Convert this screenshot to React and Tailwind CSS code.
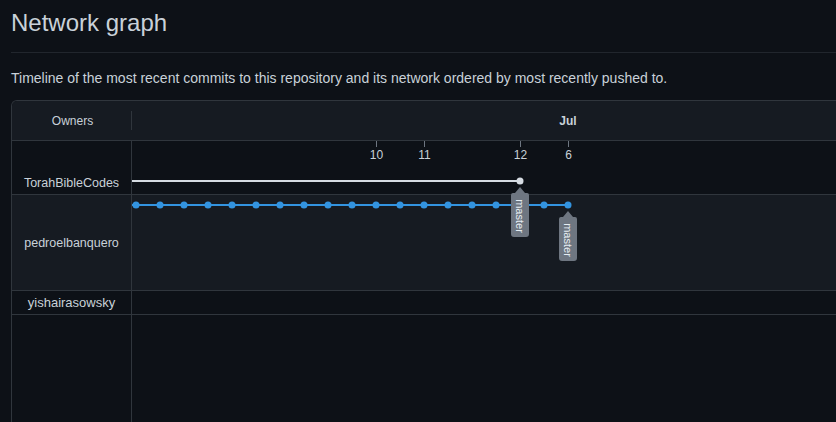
import React from "react";

const FONT = { fontFamily: '"Liberation Sans", Arial, sans-serif' };

function Label({ x, tipY }) {
  const top = tipY + 6;
  const bottom = tipY + 50;
  const l = x - 9;
  const r = x + 9;
  const d = `M ${x} ${tipY} L ${x + 5} ${top} L ${r - 2} ${top} Q ${r} ${top} ${r} ${top + 2} L ${r} ${bottom - 3} Q ${r} ${bottom} ${r - 3} ${bottom} L ${l + 3} ${bottom} Q ${l} ${bottom} ${l} ${bottom - 3} L ${l} ${top + 2} Q ${l} ${top} ${l + 2} ${top} L ${x - 5} ${top} Z`;
  const cy = (top + bottom) / 2 + 1;
  return (
    <g>
      <path d={d} fill="#6e7681" />
      <text
        x={x}
        y={cy}
        fill="#e6edf3"
        fontSize="11"
        textAnchor="middle"
        dominantBaseline="central"
        transform={`rotate(90 ${x} ${cy})`}
        style={FONT}
      >
        master
      </text>
    </g>
  );
}

function Graph() {
  const dots = Array.from({ length: 19 }, (_, k) => 136 + 24 * k);
  const dates = [
    { x: 376, t: "10" },
    { x: 424, t: "11" },
    { x: 520, t: "12" },
    { x: 568, t: "6" },
  ];
  return (
    <svg
      className="absolute left-0 top-0 pointer-events-none"
      width="836"
      height="422"
      viewBox="0 0 836 422"
    >
      <text x="568" y="125" fill="#c9d1d9" fontSize="12" fontWeight="700" textAnchor="middle" style={FONT}>
        Jul
      </text>
      {dates.map((d) => (
        <g key={d.t}>
          <line x1={d.x + 0.5} y1="141" x2={d.x + 0.5} y2="147" stroke="#6e7681" strokeWidth="1" />
          <text x={d.x + 0.5} y="159" fill="#c9d1d9" fontSize="12" textAnchor="middle" style={FONT}>
            {d.t}
          </text>
        </g>
      ))}
      <line x1="132" y1="181" x2="520" y2="181" stroke="#d6dce3" strokeWidth="2" />
      <circle cx="520" cy="181" r="3.5" fill="#d6dce3" />
      <line x1="132" y1="205" x2="568" y2="205" stroke="#3394e0" strokeWidth="2" />
      {dots.map((x) => (
        <circle key={x} cx={x} cy="205" r="3.5" fill="#3394e0" />
      ))}
      <Label x={520} tipY={187} />
      <Label x={568} tipY={211} />
    </svg>
  );
}

export default function App() {
  return (
    <div
      className="relative w-[836px] h-[422px] overflow-hidden bg-[#0d1117]"
      style={FONT}
    >
      <div className="pl-[11px]">
        <h1 className="pt-[8px] pb-[14px] text-[24px] leading-[30px] font-normal text-[#c9d1d9] border-b border-[#21262d]">
          Network graph
        </h1>
        <p className="mt-[15px] text-[14px] leading-[20px] text-[#c9d1d9]">
          Timeline of the most recent commits to this repository and its network ordered by most recently pushed to.
        </p>
        <div className="mt-[12px] w-[900px] border-l border-t border-[#30363d] rounded-tl-[6px] overflow-hidden">
          <div className="flex h-[40px] bg-[#161b22] border-b border-[#30363d]">
            <div className="w-[119px] pl-[2px] flex items-center justify-center text-[12px] text-[#c9d1d9]">
              Owners
            </div>
            <div className="w-px h-[19px] self-center bg-[#30363d]" />
            <div className="flex-1" />
          </div>
          <div className="flex h-[54px] border-b border-[#30363d] bg-[#0d1117]">
            <div className="w-[120px] border-r border-[#30363d] flex items-end justify-center pb-[3px] text-[12.5px] leading-[16px] text-[#c9d1d9]">
              TorahBibleCodes
            </div>
            <div className="flex-1" />
          </div>
          <div className="flex h-[96px] border-b border-[#30363d] bg-[#161b22]">
            <div className="w-[120px] border-r border-[#30363d] flex items-center justify-center text-[12.5px] leading-[16px] text-[#c9d1d9]">
              pedroelbanquero
            </div>
            <div className="flex-1" />
          </div>
          <div className="flex h-[24px] border-b border-[#30363d] bg-[#0d1117]">
            <div className="w-[120px] border-r border-[#30363d] flex items-center justify-center text-[13px] leading-[16px] text-[#c9d1d9]">
              yishairasowsky
            </div>
            <div className="flex-1" />
          </div>
          <div className="flex h-[200px] bg-[#0d1117]">
            <div className="w-[120px] border-r border-[#30363d]" />
            <div className="flex-1" />
          </div>
        </div>
      </div>
      <Graph />
    </div>
  );
}
